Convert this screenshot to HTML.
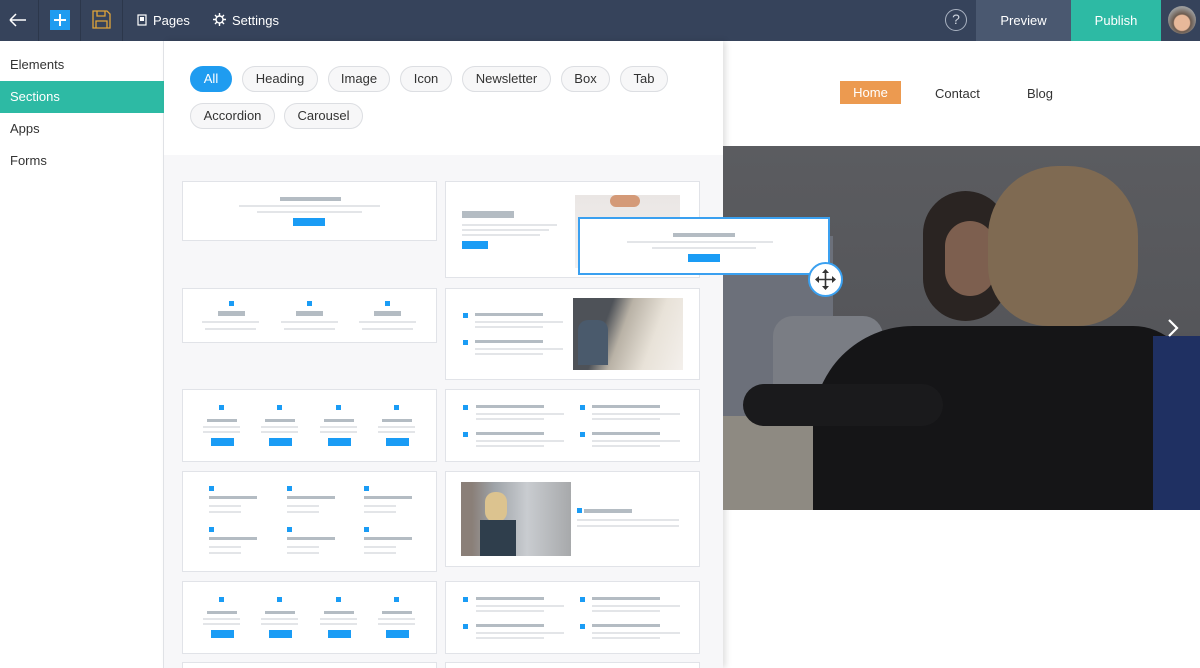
<!DOCTYPE html>
<html><head><meta charset="utf-8"><style>
*{box-sizing:border-box;margin:0;padding:0}
html,body{width:1200px;height:668px;overflow:hidden}
body{position:relative;background:#fff;font-family:"Liberation Sans",sans-serif;}
div{position:absolute}
.top{left:0;top:0;width:1200px;height:41px;background:#36435b}
.sep{top:0;width:1px;height:41px;background:#2c374b}
.tt{color:#fff;font-size:13px;top:13px}
.side{left:0;top:41px;width:164px;height:627px;background:#fff;border-right:1px solid #e3e5ea}
.si{left:0;width:164px;height:32px;line-height:32px;padding-left:10px;font-size:13px;color:#333}
.panel{left:164px;top:41px;width:559px;height:627px;background:#f7f7f9;box-shadow:3px 0 6px rgba(0,0,0,.12)}
.chip{height:26px;line-height:24px;border:1px solid #dcdee2;background:#f7f7f8;border-radius:13px;font-size:13px;color:#333;text-align:center}
.c{background:#fff;border:1px solid #e1e3e8}
.b{background:#1a9cf5}
.h{background:#b4bcc3}
.l{background:#e3e5e8;height:2px}
</style></head><body>
<div class="top"></div>
<svg style="position:absolute;left:8px;top:10px" width="20" height="20" viewBox="0 0 20 20"><path d="M2 10H18M2 10L8 4M2 10L8 16" stroke="#fff" stroke-width="1.5" fill="none"/></svg>
<div class="sep" style="left:38px"></div>
<div style="left:50px;top:10px;width:20px;height:20px;background:#1f9cf0"></div>
<svg style="position:absolute;left:50px;top:10px" width="20" height="20"><path d="M10 4V16M4 10H16" stroke="#fff" stroke-width="2"/></svg>
<div class="sep" style="left:80px"></div>
<svg style="position:absolute;left:92px;top:10px" width="19" height="19" viewBox="0 0 19 19"><path d="M1 1H15L18 4V18H1Z M5 1V6H13V1 M4 18V11H15V18" stroke="#e0a53a" stroke-width="1.3" fill="none"/></svg>
<div class="sep" style="left:122px"></div>
<svg style="position:absolute;left:137px;top:14px" width="10" height="12"><rect x="1" y="1" width="8" height="10" stroke="#fff" fill="none" stroke-width="1.2"/><rect x="3" y="3" width="4" height="4" fill="#fff"/></svg>
<div class="tt" style="left:153px">Pages</div>
<svg style="position:absolute;left:213px;top:13px" width="13" height="13" viewBox="0 0 13 13"><circle cx="6.5" cy="6.5" r="3.5" stroke="#fff" stroke-width="1.4" fill="none"/><path d="M6.5 0V2.5M6.5 10.5V13M0 6.5H2.5M10.5 6.5H13M2 2L3.7 3.7M9.3 9.3L11 11M2 11L3.7 9.3M9.3 3.7L11 2" stroke="#fff" stroke-width="1.4"/></svg>
<div class="tt" style="left:232px">Settings</div>
<div style="left:945px;top:9px;width:22px;height:22px;border:1.5px solid #aab3c2;border-radius:50%;color:#cfd5df;font-size:14px;text-align:center;line-height:19px">?</div>
<div style="left:976px;top:0;width:95px;height:41px;background:#4a5870;color:#fff;font-size:13px;text-align:center;line-height:41px">Preview</div>
<div style="left:1071px;top:0;width:90px;height:41px;background:#2dbaa4;color:#fff;font-size:13px;text-align:center;line-height:41px">Publish</div>
<div style="left:1168px;top:6px;width:28px;height:28px;border-radius:50%;background:radial-gradient(circle at 50% 60%,#e7b89a 0 35%,#6b5a4e 40%,#9a9a9a 70%)"></div>

<div class="side"></div>
<div class="si" style="top:49px">Elements</div>
<div class="si" style="top:81px;background:#2dbaa4;color:#fff">Sections</div>
<div class="si" style="top:113px">Apps</div>
<div class="si" style="top:145px">Forms</div>

<div class="panel"></div>
<div style="left:164px;top:41px;width:559px;height:114px;background:#fff"></div>
<div class="chip" style="left:190px;top:66px;width:42px;background:#1f9cf0;border-color:#1f9cf0;color:#fff">All</div>
<div class="chip" style="left:242px;top:66px;width:76px">Heading</div>
<div class="chip" style="left:328px;top:66px;width:62px">Image</div>
<div class="chip" style="left:400px;top:66px;width:52px">Icon</div>
<div class="chip" style="left:462px;top:66px;width:89px">Newsletter</div>
<div class="chip" style="left:561px;top:66px;width:49px">Box</div>
<div class="chip" style="left:620px;top:66px;width:48px">Tab</div>
<div class="chip" style="left:190px;top:103px;width:85px">Accordion</div>
<div class="chip" style="left:284px;top:103px;width:79px">Carousel</div>

<!-- row1 -->
<div class="c" style="left:182px;top:181px;width:255px;height:60px"></div>
<div class="h" style="left:280px;top:197px;width:61px;height:4px"></div>
<div class="l" style="left:239px;top:205px;width:141px"></div>
<div class="l" style="left:257px;top:211px;width:105px"></div>
<div class="b" style="left:293px;top:218px;width:32px;height:8px"></div>

<div class="c" style="left:445px;top:181px;width:255px;height:97px"></div>
<div class="h" style="left:462px;top:211px;width:52px;height:7px"></div>
<div class="l" style="left:462px;top:224px;width:95px"></div>
<div class="l" style="left:462px;top:229px;width:87px"></div>
<div class="l" style="left:462px;top:234px;width:78px"></div>
<div class="b" style="left:462px;top:241px;width:26px;height:8px"></div>
<div style="left:575px;top:195px;width:105px;height:73px;background:linear-gradient(#eae6e4,#f3f1f0)"></div>
<div style="left:610px;top:195px;width:30px;height:12px;background:#d49a78;border-radius:6px"></div>

<!-- row2 -->
<div class="c" style="left:182px;top:288px;width:255px;height:55px"></div>
<div class="b" style="left:229px;top:301px;width:5px;height:5px"></div><div class="h" style="left:218px;top:311px;width:27px;height:5px"></div><div class="l" style="left:202px;top:321px;width:57px"></div><div class="l" style="left:205px;top:328px;width:51px"></div>
<div class="b" style="left:307px;top:301px;width:5px;height:5px"></div><div class="h" style="left:296px;top:311px;width:27px;height:5px"></div><div class="l" style="left:281px;top:321px;width:57px"></div><div class="l" style="left:284px;top:328px;width:51px"></div>
<div class="b" style="left:385px;top:301px;width:5px;height:5px"></div><div class="h" style="left:374px;top:311px;width:27px;height:5px"></div><div class="l" style="left:359px;top:321px;width:57px"></div><div class="l" style="left:362px;top:328px;width:51px"></div>

<div class="c" style="left:445px;top:288px;width:255px;height:92px"></div>
<div class="b" style="left:463px;top:313px;width:5px;height:5px"></div><div class="h" style="left:475px;top:313px;width:68px;height:3px"></div><div class="l" style="left:475px;top:321px;width:88px"></div><div class="l" style="left:475px;top:326px;width:68px"></div>
<div class="b" style="left:463px;top:340px;width:5px;height:5px"></div><div class="h" style="left:475px;top:340px;width:68px;height:3px"></div><div class="l" style="left:475px;top:348px;width:88px"></div><div class="l" style="left:475px;top:353px;width:68px"></div>
<div style="left:573px;top:298px;width:110px;height:72px;background:linear-gradient(110deg,#4e5258 0 30%,#b9b2a6 45%,#e8e2d8 70%,#f4f0ec)"></div>
<div style="left:578px;top:320px;width:30px;height:45px;background:#4a5a6c;border-radius:10px 10px 0 0"></div>

<!-- row3 -->
<div class="c" style="left:182px;top:389px;width:255px;height:73px"></div>
<div class="c" style="left:445px;top:389px;width:255px;height:73px"></div>
<!-- row4 -->
<div class="c" style="left:182px;top:471px;width:255px;height:101px"></div>
<div class="c" style="left:445px;top:471px;width:255px;height:96px"></div>
<div style="left:461px;top:482px;width:110px;height:74px;background:linear-gradient(90deg,#8a7f78 0 10%,#9ea3a8 30%,#c9ccd0 60%,#a7a9ab)"></div>
<div style="left:485px;top:492px;width:22px;height:30px;background:#dcc38f;border-radius:10px"></div>
<div style="left:480px;top:520px;width:36px;height:36px;background:#2f3e4c"></div>
<div class="b" style="left:577px;top:508px;width:5px;height:5px"></div><div class="h" style="left:584px;top:509px;width:48px;height:4px"></div><div class="l" style="left:577px;top:519px;width:102px"></div><div class="l" style="left:577px;top:525px;width:102px"></div>
<!-- row5 -->
<div class="c" style="left:182px;top:581px;width:255px;height:73px"></div>
<div class="c" style="left:445px;top:581px;width:255px;height:73px"></div>
<div class="c" style="left:182px;top:662px;width:255px;height:6px;border-bottom:none"></div>
<div class="c" style="left:445px;top:662px;width:255px;height:6px;border-bottom:none"></div>

<!-- 4-col rows (row3, row5) -->
<div class="b" style="left:219px;top:405px;width:5px;height:5px"></div><div class="h" style="left:207px;top:419px;width:30px;height:3px"></div><div class="l" style="left:203px;top:426px;width:37px"></div><div class="l" style="left:203px;top:431px;width:37px"></div><div class="b" style="left:211px;top:438px;width:23px;height:8px"></div>
<div class="b" style="left:277px;top:405px;width:5px;height:5px"></div><div class="h" style="left:265px;top:419px;width:30px;height:3px"></div><div class="l" style="left:261px;top:426px;width:37px"></div><div class="l" style="left:261px;top:431px;width:37px"></div><div class="b" style="left:269px;top:438px;width:23px;height:8px"></div>
<div class="b" style="left:336px;top:405px;width:5px;height:5px"></div><div class="h" style="left:324px;top:419px;width:30px;height:3px"></div><div class="l" style="left:320px;top:426px;width:37px"></div><div class="l" style="left:320px;top:431px;width:37px"></div><div class="b" style="left:328px;top:438px;width:23px;height:8px"></div>
<div class="b" style="left:394px;top:405px;width:5px;height:5px"></div><div class="h" style="left:382px;top:419px;width:30px;height:3px"></div><div class="l" style="left:378px;top:426px;width:37px"></div><div class="l" style="left:378px;top:431px;width:37px"></div><div class="b" style="left:386px;top:438px;width:23px;height:8px"></div>

<div class="b" style="left:219px;top:597px;width:5px;height:5px"></div><div class="h" style="left:207px;top:611px;width:30px;height:3px"></div><div class="l" style="left:203px;top:618px;width:37px"></div><div class="l" style="left:203px;top:623px;width:37px"></div><div class="b" style="left:211px;top:630px;width:23px;height:8px"></div>
<div class="b" style="left:277px;top:597px;width:5px;height:5px"></div><div class="h" style="left:265px;top:611px;width:30px;height:3px"></div><div class="l" style="left:261px;top:618px;width:37px"></div><div class="l" style="left:261px;top:623px;width:37px"></div><div class="b" style="left:269px;top:630px;width:23px;height:8px"></div>
<div class="b" style="left:336px;top:597px;width:5px;height:5px"></div><div class="h" style="left:324px;top:611px;width:30px;height:3px"></div><div class="l" style="left:320px;top:618px;width:37px"></div><div class="l" style="left:320px;top:623px;width:37px"></div><div class="b" style="left:328px;top:630px;width:23px;height:8px"></div>
<div class="b" style="left:394px;top:597px;width:5px;height:5px"></div><div class="h" style="left:382px;top:611px;width:30px;height:3px"></div><div class="l" style="left:378px;top:618px;width:37px"></div><div class="l" style="left:378px;top:623px;width:37px"></div><div class="b" style="left:386px;top:630px;width:23px;height:8px"></div>

<!-- 2x2 lists (row3 R, row5 R) -->
<div class="b" style="left:463px;top:405px;width:5px;height:5px"></div><div class="h" style="left:476px;top:405px;width:68px;height:3px"></div><div class="l" style="left:476px;top:413px;width:88px"></div><div class="l" style="left:476px;top:418px;width:68px"></div>
<div class="b" style="left:463px;top:432px;width:5px;height:5px"></div><div class="h" style="left:476px;top:432px;width:68px;height:3px"></div><div class="l" style="left:476px;top:440px;width:88px"></div><div class="l" style="left:476px;top:445px;width:68px"></div>
<div class="b" style="left:580px;top:405px;width:5px;height:5px"></div><div class="h" style="left:592px;top:405px;width:68px;height:3px"></div><div class="l" style="left:592px;top:413px;width:88px"></div><div class="l" style="left:592px;top:418px;width:68px"></div>
<div class="b" style="left:580px;top:432px;width:5px;height:5px"></div><div class="h" style="left:592px;top:432px;width:68px;height:3px"></div><div class="l" style="left:592px;top:440px;width:88px"></div><div class="l" style="left:592px;top:445px;width:68px"></div>

<div class="b" style="left:463px;top:597px;width:5px;height:5px"></div><div class="h" style="left:476px;top:597px;width:68px;height:3px"></div><div class="l" style="left:476px;top:605px;width:88px"></div><div class="l" style="left:476px;top:610px;width:68px"></div>
<div class="b" style="left:463px;top:624px;width:5px;height:5px"></div><div class="h" style="left:476px;top:624px;width:68px;height:3px"></div><div class="l" style="left:476px;top:632px;width:88px"></div><div class="l" style="left:476px;top:637px;width:68px"></div>
<div class="b" style="left:580px;top:597px;width:5px;height:5px"></div><div class="h" style="left:592px;top:597px;width:68px;height:3px"></div><div class="l" style="left:592px;top:605px;width:88px"></div><div class="l" style="left:592px;top:610px;width:68px"></div>
<div class="b" style="left:580px;top:624px;width:5px;height:5px"></div><div class="h" style="left:592px;top:624px;width:68px;height:3px"></div><div class="l" style="left:592px;top:632px;width:88px"></div><div class="l" style="left:592px;top:637px;width:68px"></div>

<!-- row4 L 3x2 -->
<div class="b" style="left:209px;top:486px;width:5px;height:5px"></div><div class="h" style="left:209px;top:496px;width:48px;height:3px"></div><div class="l" style="left:209px;top:505px;width:32px"></div><div class="l" style="left:209px;top:511px;width:32px"></div>
<div class="b" style="left:209px;top:527px;width:5px;height:5px"></div><div class="h" style="left:209px;top:537px;width:48px;height:3px"></div><div class="l" style="left:209px;top:546px;width:32px"></div><div class="l" style="left:209px;top:552px;width:32px"></div>
<div class="b" style="left:287px;top:486px;width:5px;height:5px"></div><div class="h" style="left:287px;top:496px;width:48px;height:3px"></div><div class="l" style="left:287px;top:505px;width:32px"></div><div class="l" style="left:287px;top:511px;width:32px"></div>
<div class="b" style="left:287px;top:527px;width:5px;height:5px"></div><div class="h" style="left:287px;top:537px;width:48px;height:3px"></div><div class="l" style="left:287px;top:546px;width:32px"></div><div class="l" style="left:287px;top:552px;width:32px"></div>
<div class="b" style="left:364px;top:486px;width:5px;height:5px"></div><div class="h" style="left:364px;top:496px;width:48px;height:3px"></div><div class="l" style="left:364px;top:505px;width:32px"></div><div class="l" style="left:364px;top:511px;width:32px"></div>
<div class="b" style="left:364px;top:527px;width:5px;height:5px"></div><div class="h" style="left:364px;top:537px;width:48px;height:3px"></div><div class="l" style="left:364px;top:546px;width:32px"></div><div class="l" style="left:364px;top:552px;width:32px"></div>

<!-- preview site -->
<div style="left:840px;top:81px;width:61px;height:23px;background:#ec9a50;color:#fff;font-size:13px;text-align:center;line-height:23px">Home</div>
<div style="left:935px;top:86px;font-size:13px;color:#333">Contact</div>
<div style="left:1027px;top:86px;font-size:13px;color:#333">Blog</div>
<div style="left:723px;top:146px;width:477px;height:364px;background:linear-gradient(180deg,#5b5c60 0%,#55565a 50%,#3e4045 100%);overflow:hidden">
 <div style="left:0;top:90px;width:110px;height:274px;background:#6c707a"></div>
 <div style="left:50px;top:170px;width:110px;height:200px;background:#7a7d84;border-radius:20px"></div>
 <div style="left:150px;top:180px;width:140px;height:180px;background:#858688;border-radius:40px 40px 0 0"></div>
 <div style="left:200px;top:45px;width:85px;height:130px;background:#2a2422;border-radius:45px"></div>
 <div style="left:222px;top:75px;width:50px;height:75px;background:#7d5f4f;border-radius:25px"></div>
 <div style="left:0;top:270px;width:160px;height:94px;background:#8e8a82"></div>
 <div style="left:265px;top:20px;width:150px;height:160px;background:#7f6a52;border-radius:70px 70px 60px 60px"></div>
 <div style="left:90px;top:180px;width:380px;height:184px;background:#151517;border-radius:100px 60px 0 0"></div>
 <div style="left:20px;top:238px;width:200px;height:42px;background:#1a1a1c;border-radius:21px"></div>
 <div style="left:430px;top:190px;width:47px;height:174px;background:#1f3062"></div>
</div>
<svg style="position:absolute;left:1166px;top:318px" width="14" height="20"><path d="M3 2L11 10L3 18" stroke="#fff" stroke-width="2.2" fill="none"/></svg>

<!-- drag ghost -->
<div style="left:578px;top:217px;width:252px;height:58px;background:#fff;border:2px solid #3aa0f0"></div>
<div class="h" style="left:673px;top:233px;width:62px;height:4px"></div>
<div class="l" style="left:627px;top:241px;width:146px"></div>
<div class="l" style="left:652px;top:247px;width:104px"></div>
<div class="b" style="left:688px;top:254px;width:32px;height:8px"></div>
<div style="left:808px;top:262px;width:35px;height:35px;border-radius:50%;background:#fff;border:2px solid #3aa0f0"></div>
<svg style="position:absolute;left:814px;top:268px" width="23" height="23" viewBox="0 0 23 23"><path d="M11.5 2V21M2 11.5H21" stroke="#333" stroke-width="1.6"/><path d="M11.5 1L8 5H15Z M11.5 22L8 18H15Z M1 11.5L5 8V15Z M22 11.5L18 8V15Z" fill="#333"/></svg>
</body></html>
